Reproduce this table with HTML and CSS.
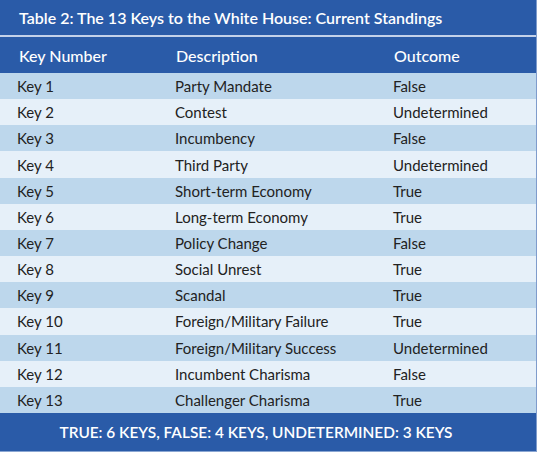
FILE: index.html
```html
<!DOCTYPE html>
<html>
<head>
<meta charset="utf-8">
<link rel="stylesheet" href="styles.css">
</head>
<body>
<div class="panel">
  <div class="title">Table 2: The 13 Keys to the White House: Current Standings</div>
  <div class="head row">
    <div class="c1">Key Number</div>
    <div class="c2">Description</div>
    <div class="c3">Outcome</div>
  </div>
  <div class="body">
    <div class="row odd"><div class="c1">Key 1</div><div class="c2">Party Mandate</div><div class="c3">False</div></div>
    <div class="row even"><div class="c1">Key 2</div><div class="c2">Contest</div><div class="c3">Undetermined</div></div>
    <div class="row odd"><div class="c1">Key 3</div><div class="c2">Incumbency</div><div class="c3">False</div></div>
    <div class="row even"><div class="c1">Key 4</div><div class="c2">Third Party</div><div class="c3">Undetermined</div></div>
    <div class="row odd"><div class="c1">Key 5</div><div class="c2">Short-term Economy</div><div class="c3">True</div></div>
    <div class="row even"><div class="c1">Key 6</div><div class="c2">Long-term Economy</div><div class="c3">True</div></div>
    <div class="row odd"><div class="c1">Key 7</div><div class="c2">Policy Change</div><div class="c3">False</div></div>
    <div class="row even"><div class="c1">Key 8</div><div class="c2">Social Unrest</div><div class="c3">True</div></div>
    <div class="row odd"><div class="c1">Key 9</div><div class="c2">Scandal</div><div class="c3">True</div></div>
    <div class="row even"><div class="c1">Key 10</div><div class="c2">Foreign/Military Failure</div><div class="c3">True</div></div>
    <div class="row odd"><div class="c1">Key 11</div><div class="c2">Foreign/Military Success</div><div class="c3">Undetermined</div></div>
    <div class="row even"><div class="c1">Key 12</div><div class="c2">Incumbent Charisma</div><div class="c3">False</div></div>
    <div class="row odd"><div class="c1">Key 13</div><div class="c2">Challenger Charisma</div><div class="c3">True</div></div>
  </div>
  <div class="foot">TRUE: 6 KEYS, FALSE: 4 KEYS, UNDETERMINED: 3 KEYS</div>
</div>
</body>
</html>
```

FILE: styles.css
```css
html, body {
  margin: 0;
  padding: 0;
  background: #ffffff;
}
.panel {
  width: 537px;
  height: 452px;
  font-family: Lato, "Liberation Sans", sans-serif;
  color: #222222;
  display: flex;
  flex-direction: column;
  box-sizing: border-box;
  border-right: 1px solid #7f9ccc;
  border-bottom: 1px solid #8aa6d2;
}
.title {
  height: 35px;
  background: #2a5ba8;
  color: #ffffff;
  font-size: 16px;
  font-weight: 600;
  padding-left: 19px;
  display: flex;
  align-items: center;
  border-bottom: 2px solid #c4d2ea;
}
.row {
  display: grid;
  grid-template-columns: 175px 218px 1fr;
  align-items: center;
}
.c1 {
  padding-left: 17px;
}
.head {
  height: 36px;
  background: #2a5ba8;
  color: #ffffff;
  font-size: 16px;
  font-weight: 500;
}
.head .c1 { padding-left: 19px; }
.head .c2 { padding-left: 1px; }
.head .c3 { padding-left: 1px; }
.body {
  display: grid;
  grid-template-rows: repeat(13, 1fr);
  height: 340px;
  font-size: 15px;
}
.odd { background: #bdd7ec; }
.even { background: #e6f0f9; }
.foot {
  flex: 1;
  background: #2a5ba8;
  color: #ffffff;
  font-size: 15.4px;
  font-weight: 600;
  display: flex;
  align-items: center;
  justify-content: center;
  padding-right: 24px;
}
```
